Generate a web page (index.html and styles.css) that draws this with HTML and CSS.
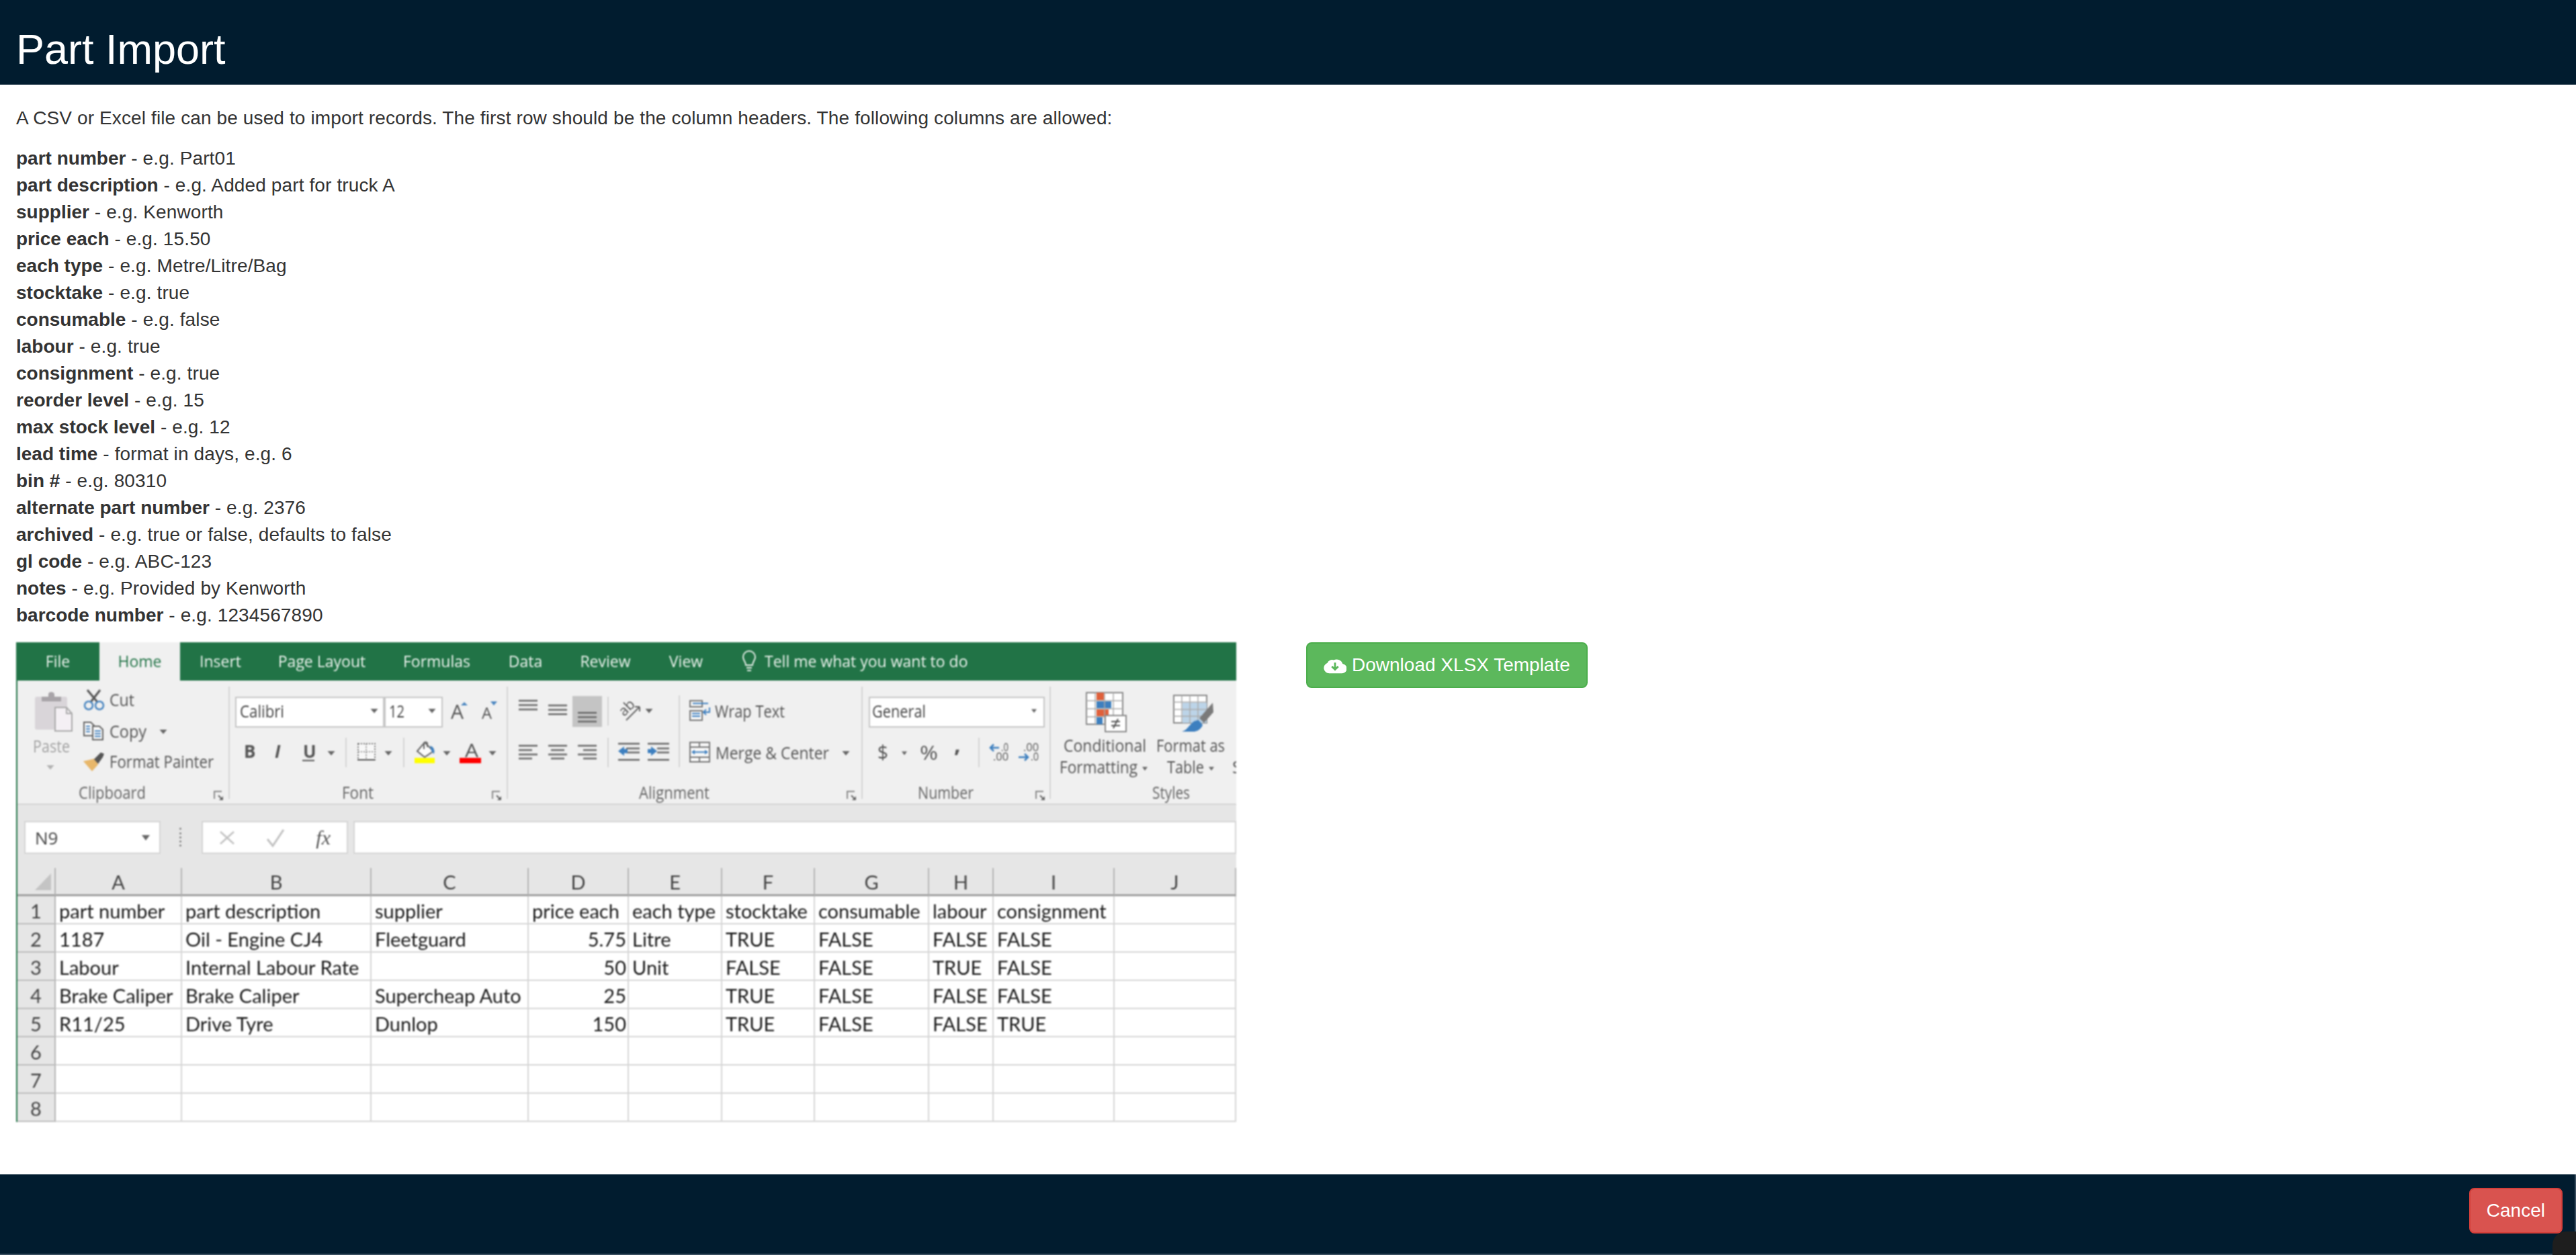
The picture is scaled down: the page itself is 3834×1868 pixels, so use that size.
FILE: index.html
```html
<!DOCTYPE html>
<html lang="en">
<head>
    <meta charset="UTF-8">
    <title>Part Import</title>
    <link rel="stylesheet" href="styles.css">
</head>
<body>
    <svg class="icon-defs">
        <defs>
            <polygon id="caret" points="-5.5,-3 5.5,-3 0,3.5" fill="#666"/>
            <polygon id="caret-small" points="-4,-2.5 4,-2.5 0,3" fill="#666"/>
            <g id="launcher" fill="none" stroke="#8a8a8a" stroke-width="2">
                <path d="M12 1H1V12"/>
                <path d="M7 7L13 13" stroke="#666"/>
                <polygon points="14,8 14,14 8,14" fill="#666" stroke="none"/>
            </g>
        </defs>
    </svg>

    <header class="page-header">
        <h1>Part Import</h1>
    </header>

    <main class="content">
        <p>A CSV or Excel file can be used to import records. The first row should be the column headers. The following columns are allowed:</p>
        <p>
            <b>part number</b> - e.g. Part01<br>
            <b>part description</b> - e.g. Added part for truck A<br>
            <b>supplier</b> - e.g. Kenworth<br>
            <b>price each</b> - e.g. 15.50<br>
            <b>each type</b> - e.g. Metre/Litre/Bag<br>
            <b>stocktake</b> - e.g. true<br>
            <b>consumable</b> - e.g. false<br>
            <b>labour</b> - e.g. true<br>
            <b>consignment</b> - e.g. true<br>
            <b>reorder level</b> - e.g. 15<br>
            <b>max stock level</b> - e.g. 12<br>
            <b>lead time</b> - format in days, e.g. 6<br>
            <b>bin #</b> - e.g. 80310<br>
            <b>alternate part number</b> - e.g. 2376<br>
            <b>archived</b> - e.g. true or false, defaults to false<br>
            <b>gl code</b> - e.g. ABC-123<br>
            <b>notes</b> - e.g. Provided by Kenworth<br>
            <b>barcode number</b> - e.g. 1234567890
        </p>

        <div class="import-row">
            <div class="excel">
                <div class="tabs">
                    <span>File</span>
                    <span class="tab-active">Home</span>
                    <span>Insert</span>
                    <span>Page Layout</span>
                    <span>Formulas</span>
                    <span>Data</span>
                    <span>Review</span>
                    <span>View</span>
                    <span class="tell-me">
                        <svg width="24" height="34" viewBox="0 0 24 34" fill="none" stroke="#e8f0ea" stroke-width="2">
                            <path d="M7 22C7 17 3 15 3 10A9 9 0 0 1 21 10C21 15 17 17 17 22Z"/>
                            <path d="M8 26H16M9 30H15"/>
                        </svg>
                        Tell me what you want to do
                    </span>
                </div>

                <div class="ribbon">
                    <svg class="group group-clipboard" viewBox="26 1013 316 185">
                        <rect x="52" y="1037" width="48" height="49" rx="3" fill="#d9d5d9"/>
                        <path d="M62 1037H72V1034Q72 1030 76 1030Q81 1030 81 1034V1037H91V1044H62Z" fill="#a8a4a8"/>
                        <path d="M82 1053H99L107 1062V1088H82Z" fill="#f4f0f4" stroke="#aaa" stroke-width="2"/>
                        <path d="M99 1053V1062H107" fill="none" stroke="#aaa" stroke-width="2"/>
                        <text class="rt rt-faint" x="49" y="1120" textLength="55" lengthAdjust="spacingAndGlyphs">Paste</text>
                        <use href="#caret" x="75" y="1142" opacity="0.45"/>

                        <g fill="none">
                            <path d="M135 1045L149 1027M145 1045L130 1027" stroke="#555" stroke-width="3"/>
                            <circle cx="132" cy="1050" r="6" stroke="#4a86c0" stroke-width="2.5"/>
                            <circle cx="148" cy="1050" r="6" stroke="#4a86c0" stroke-width="2.5"/>
                        </g>
                        <text class="rt" x="163" y="1051" textLength="37" lengthAdjust="spacingAndGlyphs">Cut</text>

                        <path d="M125 1075H135L140 1080V1095H125Z" fill="#f8f8f8" stroke="#666" stroke-width="2"/>
                        <path d="M138 1081H148L153 1086V1101H138Z" fill="#f8f8f8" stroke="#666" stroke-width="2"/>
                        <path d="M128 1081H134M128 1085H134M128 1089H134M141 1088H150M141 1092H150M141 1096H150" stroke="#4a86c0" stroke-width="2"/>
                        <text class="rt" x="163" y="1098" textLength="55" lengthAdjust="spacingAndGlyphs">Copy</text>
                        <use href="#caret" x="243" y="1089"/>

                        <path d="M124 1133L142 1129L146 1138L137 1148Z" fill="#e8b76a"/>
                        <path d="M140 1130L150 1120L155 1122L153 1127L146 1137Z" fill="#555"/>
                        <text class="rt" x="163" y="1143" textLength="155" lengthAdjust="spacingAndGlyphs">Format Painter</text>

                        <text class="rt rt-label" x="117" y="1189" textLength="100" lengthAdjust="spacingAndGlyphs">Clipboard</text>
                        <use href="#launcher" x="318" y="1177"/>
                        <rect x="340" y="1022" width="2" height="167" fill="#d4d4d4"/>
                    </svg>

                    <svg class="group group-font" viewBox="342 1013 414 185">
                        <rect x="351" y="1038" width="220" height="44" fill="#fff" stroke="#c6c6c6" stroke-width="2"/>
                        <rect x="573" y="1038" width="85" height="44" fill="#fff" stroke="#c6c6c6" stroke-width="2"/>
                        <text class="rt rt-dark" x="357" y="1068" textLength="66" lengthAdjust="spacingAndGlyphs">Calibri</text>
                        <use href="#caret" x="557" y="1058"/>
                        <text class="rt rt-dark" x="579" y="1068" textLength="23" lengthAdjust="spacingAndGlyphs">12</text>
                        <use href="#caret" x="643" y="1058"/>

                        <text class="rt rt-bigA" x="671" y="1070" textLength="19" lengthAdjust="spacingAndGlyphs">A</text>
                        <polygon points="686,1050 696,1050 691,1045" fill="#4a86c0"/>
                        <text class="rt rt-smallA" x="717" y="1070" textLength="15" lengthAdjust="spacingAndGlyphs">A</text>
                        <polygon points="730,1044 740,1044 735,1050" fill="#4a86c0"/>

                        <text class="rt rt-bold" x="363" y="1128">B</text>
                        <text class="rt rt-italic" x="409" y="1128">I</text>
                        <text class="rt rt-bold" x="451" y="1128">U</text>
                        <rect x="450" y="1131" width="18" height="2" fill="#555"/>
                        <use href="#caret" x="493" y="1121"/>
                        <rect x="514" y="1098" width="2" height="44" fill="#d4d4d4"/>

                        <rect x="533" y="1107" width="25" height="24" fill="#f8f8f8" stroke="#777" stroke-width="2" stroke-dasharray="2 2"/>
                        <path d="M545 1107V1131M533 1119H558" stroke="#999" stroke-width="2" stroke-dasharray="2 2"/>
                        <rect x="532" y="1130" width="26" height="2" fill="#555"/>
                        <use href="#caret" x="578" y="1121"/>
                        <rect x="600" y="1098" width="2" height="44" fill="#d4d4d4"/>

                        <path d="M621 1118L632 1105L645 1118L632 1127Z" fill="#fbfbfb" stroke="#666" stroke-width="2"/>
                        <path d="M631 1115V1106Q634 1103 636 1106V1112" fill="none" stroke="#666" stroke-width="2"/>
                        <path d="M640 1110Q648 1112 646 1122Q642 1120 640 1110Z" fill="#3d7fbf"/>
                        <rect x="617" y="1128" width="30" height="8" fill="#ffff00"/>
                        <use href="#caret" x="665" y="1121"/>
                        <text class="rt rt-colorA" x="692" y="1127" textLength="20" lengthAdjust="spacingAndGlyphs">A</text>
                        <rect x="684" y="1128" width="32" height="8" fill="#ff0000"/>
                        <use href="#caret" x="733" y="1121"/>

                        <text class="rt rt-label" x="509" y="1189" textLength="47" lengthAdjust="spacingAndGlyphs">Font</text>
                        <use href="#launcher" x="732" y="1177"/>
                        <rect x="754" y="1022" width="2" height="167" fill="#d4d4d4"/>
                    </svg>

                    <svg class="group group-alignment" viewBox="756 1013 528 185">
                        <g stroke="#666" stroke-width="2.5">
                            <path d="M772 1043H800M772 1049.500H800M772 1056H800"/>
                            <path d="M816 1050H844M816 1056.500H844M816 1063H844"/>
                        </g>
                        <rect x="852" y="1036" width="44" height="46" fill="#c4c4c4"/>
                        <g stroke="#666" stroke-width="2.5">
                            <path d="M860 1061H888M860 1067.500H888M860 1074H888"/>
                            <path d="M772 1110H800M772 1116.500H792M772 1123H800M772 1129H792"/>
                            <path d="M816 1110H844M820 1116.500H840M816 1123H844M820 1129H840"/>
                            <path d="M860 1110H888M868 1116.500H888M860 1123H888M868 1129H888"/>
                        </g>
                        <rect x="904" y="1037" width="2" height="43" fill="#d4d4d4"/>
                        <rect x="904" y="1098" width="2" height="44" fill="#d4d4d4"/>
                        <text class="rt rt-ab" transform="translate(929 1067) rotate(-45)">ab</text>
                        <path d="M932 1072L952 1052M952 1052H945M952 1052V1059" fill="none" stroke="#666" stroke-width="2"/>
                        <use href="#caret" x="966" y="1058"/>

                        <path d="M920 1107H952M932 1114H952M932 1120H952M920 1131H952" stroke="#666" stroke-width="2.5"/>
                        <polygon points="920,1118 929,1111 929,1115 934,1115 934,1121 929,1121 929,1125" fill="#3d7fbf"/>
                        <path d="M964 1107H996M978 1114H996M978 1120H996M964 1131H996" stroke="#666" stroke-width="2.5"/>
                        <polygon points="978,1118 969,1111 969,1115 964,1115 964,1121 969,1121 969,1125" fill="#3d7fbf"/>
                        <rect x="1010" y="1035" width="2" height="107" fill="#d4d4d4"/>

                        <rect x="1027" y="1043" width="18" height="9" fill="#f8f8f8" stroke="#777" stroke-width="2"/>
                        <path d="M1031 1047H1054" stroke="#3d7fbf" stroke-width="2"/>
                        <rect x="1027" y="1058" width="18" height="14" fill="#f8f8f8" stroke="#777" stroke-width="2"/>
                        <path d="M1030 1062H1042M1030 1066H1042" stroke="#3d7fbf" stroke-width="2"/>
                        <path d="M1056 1053V1060H1048M1051 1056L1047 1060L1051 1064" fill="none" stroke="#3d7fbf" stroke-width="2"/>
                        <text class="rt" x="1064" y="1068" textLength="104" lengthAdjust="spacingAndGlyphs">Wrap Text</text>

                        <rect x="1027" y="1105" width="29" height="29" fill="#f8f8f8" stroke="#777" stroke-width="2"/>
                        <path d="M1027 1112H1056M1027 1127H1056M1041 1105V1112M1041 1127V1134" stroke="#777" stroke-width="2"/>
                        <path d="M1031 1119.500H1052" stroke="#3d7fbf" stroke-width="2"/>
                        <polygon points="1029,1119.500 1034,1116 1034,1123" fill="#3d7fbf"/>
                        <polygon points="1054,1119.500 1049,1116 1049,1123" fill="#3d7fbf"/>
                        <text class="rt" x="1065" y="1130" textLength="169" lengthAdjust="spacingAndGlyphs">Merge &amp; Center</text>
                        <use href="#caret" x="1259" y="1121"/>

                        <text class="rt rt-label" x="951" y="1189" textLength="105" lengthAdjust="spacingAndGlyphs">Alignment</text>
                        <use href="#launcher" x="1260" y="1177"/>
                        <rect x="1282" y="1022" width="2" height="167" fill="#d4d4d4"/>
                    </svg>

                    <svg class="group group-number" viewBox="1284 1013 280 185">
                        <rect x="1294" y="1038" width="260" height="44" fill="#fff" stroke="#c6c6c6" stroke-width="2"/>
                        <text class="rt rt-dark" x="1298" y="1068" textLength="80" lengthAdjust="spacingAndGlyphs">General</text>
                        <use href="#caret-small" x="1539" y="1058"/>
                        <text class="rt rt-money" x="1306" y="1130" textLength="16" lengthAdjust="spacingAndGlyphs">$</text>
                        <use href="#caret-small" x="1346" y="1121"/>
                        <text class="rt rt-money" x="1369" y="1131" textLength="27" lengthAdjust="spacingAndGlyphs">%</text>
                        <text class="rt rt-comma" x="1420" y="1120">,</text>
                        <rect x="1456" y="1098" width="2" height="44" fill="#d4d4d4"/>

                        <path d="M1474 1113H1487M1479 1108L1474 1113L1479 1118" fill="none" stroke="#3d7fbf" stroke-width="2.5"/>
                        <text class="rt rt-tiny" x="1490" y="1118" textLength="11" lengthAdjust="spacingAndGlyphs">.0</text>
                        <text class="rt rt-tiny" x="1478" y="1132" textLength="23" lengthAdjust="spacingAndGlyphs">.00</text>
                        <text class="rt rt-tiny" x="1523" y="1118" textLength="23" lengthAdjust="spacingAndGlyphs">.00</text>
                        <path d="M1516 1127H1530M1525 1122L1530 1127L1525 1132" fill="none" stroke="#3d7fbf" stroke-width="2.5"/>
                        <text class="rt rt-tiny" x="1534" y="1132" textLength="12" lengthAdjust="spacingAndGlyphs">.0</text>

                        <text class="rt rt-label" x="1366" y="1189" textLength="83" lengthAdjust="spacingAndGlyphs">Number</text>
                        <use href="#launcher" x="1541" y="1177"/>
                        <rect x="1562" y="1022" width="2" height="167" fill="#d4d4d4"/>
                    </svg>

                    <svg class="group group-styles" viewBox="1564 1013 276 185">
                        <rect x="1617" y="1031" width="54" height="47" fill="#fff" stroke="#888" stroke-width="2"/>
                        <rect x="1632" y="1031" width="11" height="11" fill="#e0603a"/>
                        <rect x="1632" y="1044" width="22" height="10" fill="#3d7fbf"/>
                        <rect x="1632" y="1056" width="18" height="10" fill="#e0603a"/>
                        <rect x="1632" y="1067" width="9" height="11" fill="#3d7fbf"/>
                        <path d="M1630 1031V1078M1644 1031V1078M1657 1031V1078M1617 1043H1671M1617 1055H1671M1617 1067H1671" stroke="#aaa" stroke-width="1.500"/>
                        <rect x="1645" y="1065" width="31" height="24" fill="#fff" stroke="#888" stroke-width="2"/>
                        <path d="M1654 1074H1667M1654 1080H1667M1664 1070L1657 1084" fill="none" stroke="#555" stroke-width="2"/>

                        <rect x="1747" y="1035" width="49" height="41" fill="#fff" stroke="#888" stroke-width="2"/>
                        <rect x="1760" y="1046" width="36" height="30" fill="#bcd4e8"/>
                        <path d="M1759 1035V1076M1771 1035V1076M1783 1035V1076M1747 1045H1796M1747 1056H1796M1747 1066H1796" stroke="#aaa" stroke-width="1.500"/>
                        <path d="M1805 1046L1806 1060L1792 1076L1785 1069Z" fill="#7a7a7a"/>
                        <path d="M1759 1089C1770 1086 1772 1072 1784 1072L1790 1079C1788 1085 1782 1089 1776 1089Z" fill="#3d7fbf"/>

                        <text class="rt" x="1583" y="1119" textLength="123" lengthAdjust="spacingAndGlyphs">Conditional</text>
                        <text class="rt" x="1577" y="1151" textLength="116" lengthAdjust="spacingAndGlyphs">Formatting</text>
                        <use href="#caret-small" x="1704" y="1144"/>
                        <text class="rt" x="1721" y="1119" textLength="102" lengthAdjust="spacingAndGlyphs">Format as</text>
                        <text class="rt" x="1737" y="1151" textLength="55" lengthAdjust="spacingAndGlyphs">Table</text>
                        <use href="#caret-small" x="1803" y="1144"/>
                        <text class="rt" x="1834" y="1151">S</text>
                        <text class="rt rt-label" x="1715" y="1189" textLength="56" lengthAdjust="spacingAndGlyphs">Styles</text>
                    </svg>
                </div>

                <div class="formula-bar">
                    <div class="name-box">
                        N9
                        <svg width="12" height="8" viewBox="0 0 12 8"><polygon points="0,0 12,0 6,8" fill="#666"/></svg>
                    </div>
                    <div class="bar-dots"></div>
                    <div class="fx-box">
                        <svg width="24" height="24" viewBox="0 0 24 24" fill="none" stroke="#c2c2c2" stroke-width="2.500"><path d="M2 3L22 21M22 3L2 21"/></svg>
                        <svg width="28" height="28" viewBox="0 0 28 28" fill="none" stroke="#c2c2c2" stroke-width="3"><path d="M2 16L10 26L26 2"/></svg>
                        <i>fx</i>
                    </div>
                    <div class="formula-input"></div>
                </div>

                <table class="sheet">
                    <colgroup>
                        <col><col><col><col><col><col><col><col><col><col><col>
                    </colgroup>
                    <thead>
                        <tr>
                            <th class="corner"><span></span></th>
                            <th>A</th><th>B</th><th>C</th><th>D</th><th>E</th><th>F</th><th>G</th><th>H</th><th>I</th><th>J</th>
                        </tr>
                    </thead>
                    <tbody>
                        <tr><th>1</th><td>part number</td><td>part description</td><td>supplier</td><td>price each</td><td>each type</td><td>stocktake</td><td>consumable</td><td>labour</td><td>consignment</td><td></td></tr>
                        <tr><th>2</th><td>1187</td><td>Oil - Engine CJ4</td><td>Fleetguard</td><td class="num">5.75</td><td>Litre</td><td>TRUE</td><td>FALSE</td><td>FALSE</td><td>FALSE</td><td></td></tr>
                        <tr><th>3</th><td>Labour</td><td>Internal Labour Rate</td><td></td><td class="num">50</td><td>Unit</td><td>FALSE</td><td>FALSE</td><td>TRUE</td><td>FALSE</td><td></td></tr>
                        <tr><th>4</th><td>Brake Caliper</td><td>Brake Caliper</td><td>Supercheap Auto</td><td class="num">25</td><td></td><td>TRUE</td><td>FALSE</td><td>FALSE</td><td>FALSE</td><td></td></tr>
                        <tr><th>5</th><td>R11/25</td><td>Drive Tyre</td><td>Dunlop</td><td class="num">150</td><td></td><td>TRUE</td><td>FALSE</td><td>FALSE</td><td>TRUE</td><td></td></tr>
                        <tr><th>6</th><td></td><td></td><td></td><td></td><td></td><td></td><td></td><td></td><td></td><td></td></tr>
                        <tr><th>7</th><td></td><td></td><td></td><td></td><td></td><td></td><td></td><td></td><td></td><td></td></tr>
                        <tr><th>8</th><td></td><td></td><td></td><td></td><td></td><td></td><td></td><td></td><td></td><td></td></tr>
                    </tbody>
                </table>
            </div>

            <a class="btn btn-success" href="#">
                <svg width="34" height="26" viewBox="0 0 36 26">
                    <path d="M9 26A8.500 8.500 0 0 1 6 9.500A8 8 0 0 1 16 5A10 10 0 0 1 30 11A7.500 7.500 0 0 1 28 26Z" fill="#fff"/>
                    <path d="M18 9V19M13 15L18 20L23 15" fill="none" stroke="#5cb85c" stroke-width="3"/>
                </svg>
                Download XLSX Template
            </a>
        </div>
    </main>

    <footer class="page-footer">
        <a class="btn btn-danger" href="#">Cancel</a>
    </footer>

    <div class="window-corner"></div>
</body>
</html>
```

FILE: styles.css
```css
* {
    box-sizing: border-box;
}

html, body {
    height: 100%;
}

body {
    margin: 0;
    display: flex;
    flex-direction: column;
    font-family: "Liberation Sans", Arial, sans-serif;
    font-size: 28px;
    line-height: 40px;
    color: #333;
    background: #fff;
    overflow: hidden;
}

.icon-defs {
    display: none;
}

.page-header {
    height: 126px;
    flex-shrink: 0;
    padding: 20px 24px 0;
    display: flex;
    align-items: center;
    background: #011c2f;
}

.page-header h1 {
    margin: 0;
    font-size: 63px;
    font-weight: normal;
    line-height: 1;
    color: #fff;
}

.content {
    flex: 1;
    padding: 30px 24px 0;
}

.content p {
    margin: 0 0 20px;
    letter-spacing: 0.12px;
}

.content b {
    letter-spacing: 0;
}

.import-row {
    display: flex;
    align-items: flex-start;
    gap: 104px;
}

.btn {
    display: inline-flex;
    align-items: center;
    gap: 8px;
    padding: 12px 24px;
    border: 2px solid transparent;
    border-radius: 8px;
    color: #fff;
    text-decoration: none;
    white-space: nowrap;
}

.btn-success {
    background: #5cb85c;
    border-color: #4cae4c;
}

.btn-danger {
    background: #d9534f;
    border-color: #d43f3a;
}

.page-footer {
    height: 120px;
    flex-shrink: 0;
    padding: 20px 18px 0 0;
    display: flex;
    justify-content: flex-end;
    align-items: flex-start;
    background: #011c2f;
    border-right: 2px solid #3a4f60;
    border-bottom: 2px solid #3a4f60;
}

.window-corner {
    position: absolute;
    right: 0;
    bottom: 0;
    width: 35px;
    height: 35px;
    background: #1e1e1e;
    border-top-left-radius: 20px;
}

/* Excel screenshot */
.excel {
    flex-shrink: 0;
    width: 1816px;
    height: 714px;
    overflow: hidden;
    display: flex;
    flex-direction: column;
    border-left: 2px solid #217346;
    background: #e6e6e6;
    filter: blur(0.8px);
}

.tabs {
    height: 57px;
    flex-shrink: 0;
    margin-left: -2px;
    display: grid;
    grid-template-columns: 124px 120px 120px 182px 160px 104px 134px 106px 1fr;
    align-items: center;
    background: #217346;
    color: #eef4ef;
    font-family: "Open Sans", sans-serif;
    font-size: 23px;
    line-height: 57px;
    text-align: center;
}

.tab-active {
    background: #f0f0f0;
    color: #217346;
}

.tell-me {
    display: flex;
    align-items: center;
    gap: 11px;
    padding-left: 29px;
    text-align: left;
    white-space: nowrap;
}

.ribbon {
    height: 185px;
    flex-shrink: 0;
    display: flex;
    background: #f0f0f0;
    border-bottom: 2px solid #d5d5d5;
}

.group {
    display: block;
    height: 185px;
    flex-shrink: 0;
}

.group-clipboard { width: 316px; }
.group-font { width: 414px; }
.group-alignment { width: 528px; }
.group-number { width: 280px; }
.group-styles { width: 276px; }

.rt {
    font-family: "Open Sans", sans-serif;
    font-size: 25px;
    fill: #555;
}

.rt-faint { fill: #a4a4a4; }
.rt-label { fill: #666; }
.rt-dark { fill: #444; }
.rt-bold { font-weight: bold; font-size: 26px; }
.rt-italic { font-weight: bold; font-style: italic; font-size: 26px; }
.rt-bigA { font-size: 30px; }
.rt-smallA { font-size: 24px; }
.rt-colorA { font-size: 27px; }
.rt-ab { font-size: 21px; }
.rt-money { font-size: 30px; }
.rt-comma { font-size: 34px; font-weight: bold; }
.rt-tiny { font-size: 17px; }

.formula-bar {
    height: 94px;
    flex-shrink: 0;
    padding: 24px 0 0 10px;
    display: flex;
    align-items: flex-start;
    background: #e6e6e6;
}

.name-box,
.fx-box,
.formula-input {
    height: 49px;
    background: #fff;
    border: 2px solid #d5d5d5;
}

.name-box {
    width: 203px;
    padding: 0 14px;
    display: flex;
    align-items: center;
    justify-content: space-between;
    font-family: "Open Sans", sans-serif;
    font-size: 26px;
    line-height: 1;
    color: #444;
}

.bar-dots {
    width: 4px;
    height: 28px;
    margin: 10px 29px 0 28px;
    border-left: 3px dotted #999;
}

.fx-box {
    width: 218px;
    padding: 0 24px;
    display: flex;
    align-items: center;
    justify-content: space-between;
    font-family: "Liberation Serif", serif;
    font-size: 30px;
    color: #555;
}

.formula-input {
    flex: 1;
    margin-left: 8px;
}

.sheet {
    width: 1814px;
    table-layout: fixed;
    border-collapse: separate;
    border-spacing: 0;
    font-family: Lato, sans-serif;
    font-size: 29px;
    line-height: 1;
    color: #1a1a1a;
    background: #fff;
}

.sheet col:nth-child(1) { width: 57px; }
.sheet col:nth-child(2) { width: 188px; }
.sheet col:nth-child(3) { width: 282px; }
.sheet col:nth-child(4) { width: 234px; }
.sheet col:nth-child(5) { width: 149px; }
.sheet col:nth-child(6) { width: 139px; }
.sheet col:nth-child(7) { width: 138px; }
.sheet col:nth-child(8) { width: 170px; }
.sheet col:nth-child(9) { width: 96px; }
.sheet col:nth-child(10) { width: 180px; }
.sheet col:nth-child(11) { width: 181px; }

.sheet th,
.sheet td {
    height: 42px;
    padding: 2px 0 0;
    overflow: hidden;
    white-space: nowrap;
    border-right: 2px solid #d6d6d6;
    border-bottom: 2px solid #d6d6d6;
}

.sheet td {
    padding: 2px 2px 0 5px;
}

.sheet th {
    font-weight: normal;
    background: #e6e6e6;
    color: #444;
    border-right-color: #b5b5b5;
    border-bottom-color: #bdbdbd;
}

.sheet thead th {
    border-bottom: 3px solid #a0a0a0;
}

.sheet td.num {
    text-align: right;
}

.corner span {
    display: block;
    width: 24px;
    height: 25px;
    margin: 0 5px 0 auto;
    background: #c4c4c4;
    clip-path: polygon(100% 0, 100% 100%, 0 100%);
}
```
